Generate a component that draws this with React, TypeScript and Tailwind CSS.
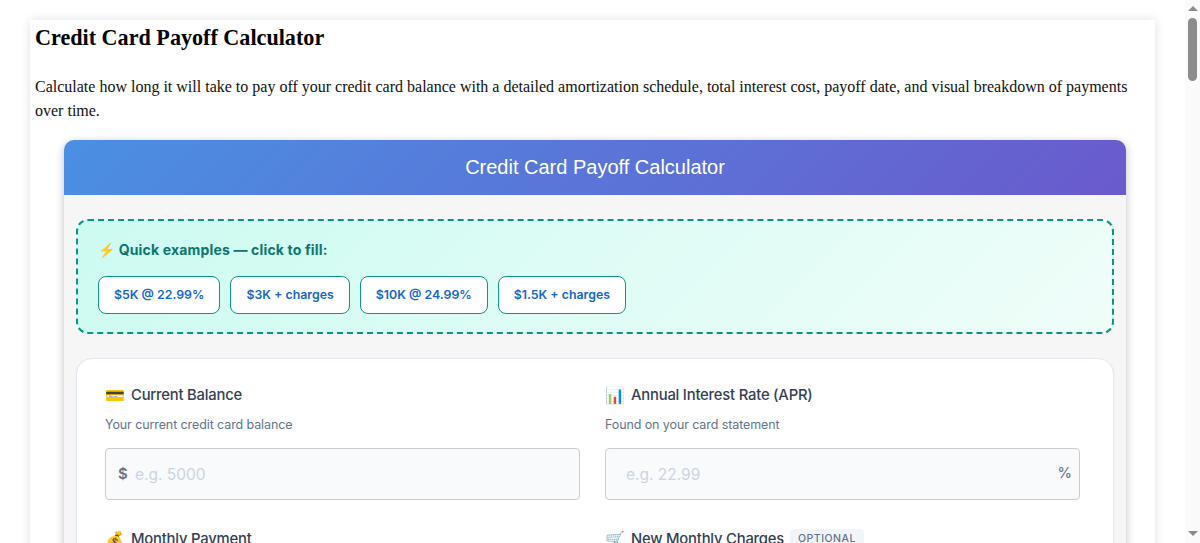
const SANS = "font-['Inter','Noto_Sans',sans-serif]";

const examples = ['$5K @ 22.99%', '$3K + charges', '$10K @ 24.99%', '$1.5K + charges'];

function Field({ icon, label, hint, placeholder, prefix, suffix, badge }: {
  icon: string; label: string; hint: string; placeholder: string; prefix?: string; suffix?: string; badge?: string;
}) {
  return (
    <div className="min-w-0">
      <div className="flex items-center h-[22px] gap-[8px]">
        <span className="text-[16px] w-[18px] text-center">{icon}</span>
        <span className="text-[14.8px] font-[550] text-[#334155] tracking-[-0.2px]">{label}</span>
        {badge && (
          <span className="ml-[-2px] rounded-[4px] bg-[#f1f5f9] px-[8px] py-[2px] text-[10.5px] font-medium tracking-[0.5px] text-[#64748b]">{badge}</span>
        )}
      </div>
      <p className="mt-[10px] text-[12.5px] leading-[18px] text-[#64748b] tracking-[-0.1px]">{hint}</p>
      <div className="relative mt-[14px]">
        {prefix && <span className="absolute left-[13px] top-[16px] text-[15px] leading-[20px] font-semibold text-[#64748b]">{prefix}</span>}
        <input
          readOnly
          placeholder={placeholder}
          className={`block w-full h-[52px] rounded-[4px] border border-[#cccccc] bg-[#f8fafc] text-[15.5px] outline-none placeholder:text-[#cbd5e1] ${prefix ? 'pl-[29px]' : 'pl-[20px]'}`}
        />
        {suffix && <span className="absolute right-[8px] top-[15px] text-[14.5px] leading-[20px] font-medium text-[#64748b]">{suffix}</span>}
      </div>
    </div>
  );
}

function ScrollBar() {
  return (
    <div className="flex w-[15px] shrink-0 flex-col items-center bg-[#fafafa]">
      <div className="mt-[6px] h-0 w-0 border-x-[5px] border-b-[5px] border-x-transparent border-b-[#8a8a8a]" />
      <div className="mt-[7px] h-[63px] w-[9px] rounded-[5px] bg-[#8c8c8c]" />
      <div className="mb-[7px] mt-auto h-0 w-0 border-x-[5px] border-t-[5px] border-x-transparent border-t-[#8a8a8a]" />
    </div>
  );
}

export default function App() {
  return (
    <div className="flex h-screen overflow-hidden bg-white font-['Liberation_Serif',serif] text-black">
      <div className="min-w-0 flex-1 overflow-hidden px-[30px] pt-[20px]">
        <div className="min-h-[600px] bg-white p-[5px] shadow-[0_0_10px_rgba(0,0,0,0.12)]">
          <h1 className="text-[22.15px] leading-[25px] font-bold">Credit Card Payoff Calculator</h1>
          <p className="mt-[25px] text-[16px] leading-[24px] text-[#111]">
            Calculate how long it will take to pay off your credit card balance with a detailed amortization schedule, total interest cost, payoff date, and visual breakdown of payments over time.
          </p>

          <div className={`mt-[17px] ml-[29px] mr-[24px] rounded-[10px] bg-[#f6f6f6] shadow-[0_2px_8px_rgba(0,0,0,0.25)] ${SANS}`}>
            <div className="flex h-[55px] items-center justify-center rounded-t-[10px] bg-[linear-gradient(135deg,#4a90e2,#6a5acd)] pb-[2px] font-['Liberation_Sans',sans-serif] text-[20px] text-white">
              Credit Card Payoff Calculator
            </div>
            <div className="p-[12px] pt-[24px]">
              <div className="h-[115px] rounded-[12px] border-2 border-dashed border-[#0d9488] bg-[linear-gradient(135deg,#ccfbf1,#f0fdf9)] px-[20px] pt-[19px]">
                <div className="text-[14px] tracking-[0.17px] leading-[20px] font-bold text-[#0f766e]">⚡ Quick examples — click to fill:</div>
                <div className="mt-[16px] flex gap-[10px]">
                  {examples.map(e => (
                    <button key={e} className="h-[38px] rounded-[8px] border border-[#0d9488] bg-white px-[15px] text-[12.35px] font-semibold text-[#1666cc]">{e}</button>
                  ))}
                </div>
              </div>

              <div className="mt-[24px] rounded-[16px] border border-[#e2e8f0] bg-white pl-[28px] pr-[33px] pt-[25px] pb-[24px] shadow-[0_1px_3px_rgba(0,0,0,0.05)]">
                <div className="grid grid-cols-2 gap-x-[25px] gap-y-[28px]">
                  <Field icon="💳" label="Current Balance" hint="Your current credit card balance" placeholder="e.g. 5000" prefix="$" />
                  <Field icon="📊" label="Annual Interest Rate (APR)" hint="Found on your card statement" placeholder="e.g. 22.99" suffix="%" />
                  <Field icon="💰" label="Monthly Payment" hint="How much you pay each month" placeholder="e.g. 200" prefix="$" />
                  <Field icon="🛒" label="New Monthly Charges" hint="Purchases added each month" placeholder="e.g. 100" prefix="$" badge="OPTIONAL" />
                </div>
              </div>
            </div>
          </div>
        </div>
      </div>
      <ScrollBar />
    </div>
  );
}
